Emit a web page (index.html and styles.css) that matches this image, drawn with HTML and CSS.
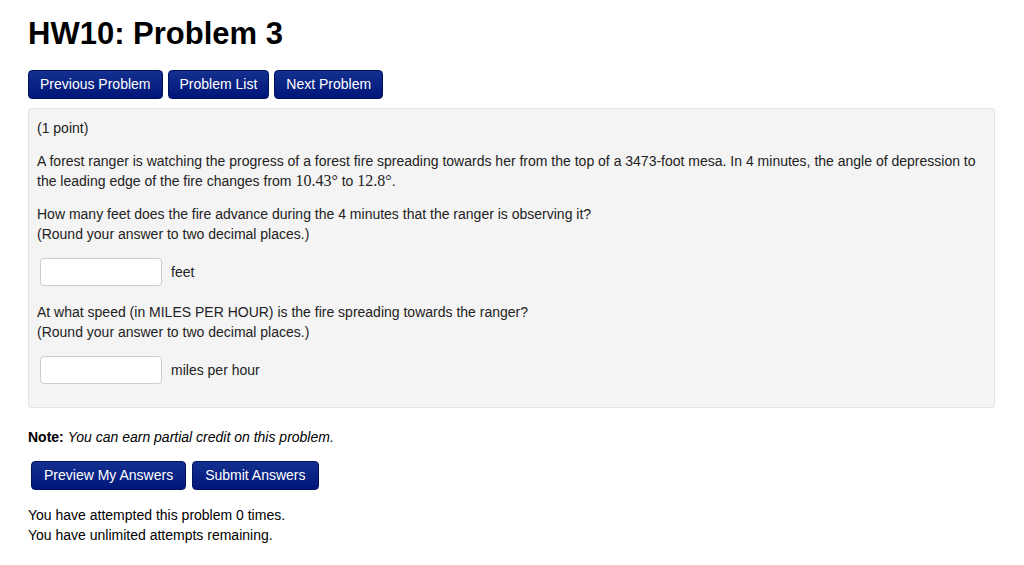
FILE: index.html
```html
<!DOCTYPE html>
<html lang="en">
<head>
    <meta charset="UTF-8">
    <title>HW10: Problem 3</title>
    <link rel="stylesheet" href="styles.css">
</head>
<body>
    <div class="page">
        <h1>HW10: Problem 3</h1>

        <!-- Problem navigation -->
        <div class="nav-buttons">
            <a class="btn" href="#">Previous Problem</a>
            <a class="btn" href="#">Problem List</a>
            <a class="btn" href="#">Next Problem</a>
        </div>

        <!-- Problem body -->
        <div class="well">
            <p>(1 point)</p>
            <p>A forest ranger is watching the progress of a forest fire spreading towards her from the top of a 3473-foot mesa. In 4 minutes, the angle of depression to the leading edge of the fire changes from <span class="math">10.43&deg;</span> to <span class="math">12.8&deg;</span>.</p>
            <p>How many feet does the fire advance during the 4 minutes that the ranger is observing it?<br>(Round your answer to two decimal places.)</p>
            <div class="answer-row">
                <input type="text" class="answer">
                <span>feet</span>
            </div>
            <p>At what speed (in MILES PER HOUR) is the fire spreading towards the ranger?<br>(Round your answer to two decimal places.)</p>
            <div class="answer-row">
                <input type="text" class="answer">
                <span>miles per hour</span>
            </div>
        </div>

        <p class="note"><b>Note:</b> <i>You can earn partial credit on this problem.</i></p>

        <div class="submit-buttons">
            <button class="btn">Preview My Answers</button>
            <button class="btn">Submit Answers</button>
        </div>

        <p class="attempts">You have attempted this problem 0 times.<br>You have unlimited attempts remaining.</p>
    </div>
</body>
</html>
```

FILE: styles.css
```css
body, html {
    margin: 0;
    padding: 0;
    font-family: "Liberation Sans", Arial, sans-serif;
    font-size: 14px;
    line-height: 20px;
    color: #222;
    background: #fff;
}

.page {
    padding: 14px 29px 0 28px;
}

h1 {
    margin: 0;
    font-size: 31px;
    line-height: 40px;
    font-weight: bold;
    color: #000;
}

/* Buttons */
.btn {
    display: inline-block;
    height: 29px;
    line-height: 27px;
    padding: 0 11px;
    font-family: "Liberation Sans", Arial, sans-serif;
    font-size: 14px;
    color: #fff;
    text-decoration: none;
    background: linear-gradient(#13308f, #001679);
    border: 1px solid #001060;
    border-radius: 4px;
    box-sizing: border-box;
    cursor: pointer;
}

.nav-buttons {
    display: flex;
    gap: 5px;
    margin-top: 16px;
}

.submit-buttons {
    display: flex;
    gap: 6px;
    margin: 14px 0 0 3px;
}

.submit-buttons .btn {
    padding: 0 12px;
}

/* Problem well */
.well {
    margin-top: 9px;
    padding: 9px 8px 23px;
    background-color: #f4f4f4;
    border: 1px solid #e3e3e3;
    border-radius: 3px;
}

.well p {
    margin: 0 0 13px;
}

.math {
    font-family: "Liberation Serif", "Times New Roman", serif;
    font-size: 16px;
    line-height: 1;
}

.answer-row {
    display: flex;
    align-items: center;
    gap: 9px;
    margin: 14px 0 16px 3px;
}

.answer-row:last-child {
    margin-bottom: 0;
}

.answer {
    width: 122px;
    height: 28px;
    box-sizing: border-box;
    border: 1px solid #ccc;
    border-radius: 4px;
    background: #fff;
}

.note {
    margin: 19px 0 0;
    color: #000;
}

.attempts {
    margin: 15px 0 0;
    color: #000;
}
```
